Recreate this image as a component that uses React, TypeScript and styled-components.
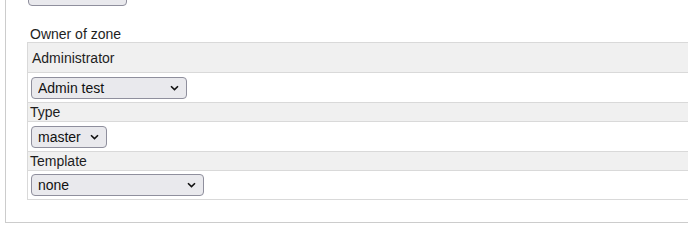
import React from 'react';
import styled, { createGlobalStyle } from 'styled-components';

const GlobalStyle = createGlobalStyle`
  html, body {
    margin: 0;
    padding: 0;
    background: #ffffff;
    overflow: hidden;
  }
  body {
    font-family: "Liberation Sans", Arial, sans-serif;
    font-size: 14px;
    color: #1e1e1e;
  }
`;

const Page = styled.div`
  width: 900px;
  margin: -20px 0 0 5px;
`;

const Panel = styled.div`
  border: 1px solid #cccccc;
  border-top: none;
  padding: 0 0 22px 21px;
`;

const TopButton = styled.button`
  display: block;
  width: 99px;
  height: 26px;
  margin-left: 1px;
  background: #e9e9ed;
  border: 1px solid #8f8f9d;
  border-radius: 4px;
`;

const Caption = styled.div`
  margin-top: 20px;
  padding-left: 3px;
  line-height: 16px;
`;

const Table = styled.div`
  display: flex;
  flex-direction: column;
  border: 1px solid #d9d9d9;
  border-right: none;
`;

const Row = styled.div<{ $shade?: boolean; $h: number; $pad?: number }>`
  display: flex;
  align-items: center;
  height: ${(p) => p.$h}px;
  padding-left: ${(p) => p.$pad ?? 3}px;
  background: ${(p) => (p.$shade ? '#f0f0f0' : '#ffffff')};
  border-top: 1px solid #d9d9d9;
  &:first-child {
    border-top: none;
  }
`;

const SelectWrap = styled.div<{ $w: number }>`
  position: relative;
  width: ${(p) => p.$w}px;
  height: 22px;
`;

const Select = styled.select`
  appearance: none;
  -webkit-appearance: none;
  width: 100%;
  height: 100%;
  box-sizing: border-box;
  margin: 0;
  padding: 0 24px 0 6px;
  font-family: "Liberation Sans", Arial, sans-serif;
  font-size: 14px;
  color: #111111;
  background: #e9e9ed;
  border: 1px solid #8f8f9d;
  border-radius: 4px;
  outline: none;
`;

const Chevron = styled.svg`
  position: absolute;
  right: 8px;
  top: 8px;
  width: 9px;
  height: 6px;
  pointer-events: none;
`;

const Dropdown = ({ value, width }: { value: string; width: number }) => (
  <SelectWrap $w={width}>
    <Select defaultValue={value}>
      <option>{value}</option>
    </Select>
    <Chevron viewBox="0 0 9 6">
      <path d="M1 1.2 L4.5 4.6 L8 1.2" fill="none" stroke="#111" strokeWidth="1.6" />
    </Chevron>
  </SelectWrap>
);

export default function App() {
  return (
    <>
      <GlobalStyle />
      <Page>
        <Panel>
          <TopButton />
          <Caption>Owner of zone</Caption>
          <Table>
            <Row $shade $h={29} $pad={4}>Administrator</Row>
            <Row $h={29}>
              <Dropdown value="Admin test" width={156} />
            </Row>
            <Row $shade $h={18} $pad={2}>Type</Row>
            <Row $h={29}>
              <Dropdown value="master" width={76} />
            </Row>
            <Row $shade $h={18} $pad={2}>Template</Row>
            <Row $h={28}>
              <Dropdown value="none" width={173} />
            </Row>
          </Table>
        </Panel>
      </Page>
    </>
  );
}
